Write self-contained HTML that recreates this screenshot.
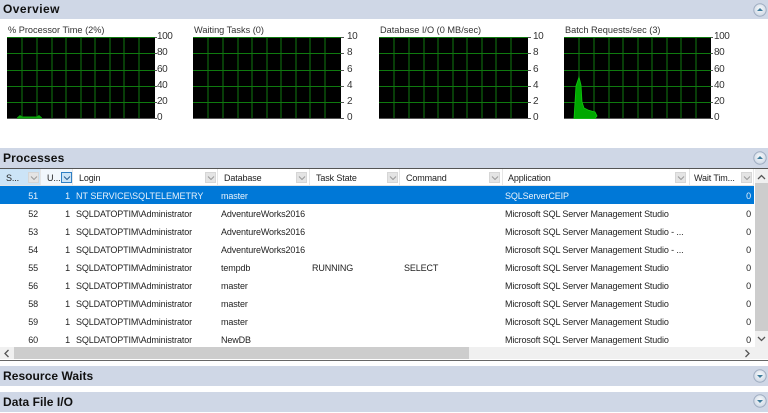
<!DOCTYPE html>
<html>
<head>
<meta charset="utf-8">
<style>
html,body{margin:0;padding:0;background:#fff}
body{width:768px;height:413px;overflow:hidden;position:relative;font-family:"Liberation Sans",sans-serif;font-size:9px;color:#222}
.sec{position:absolute;left:0;width:768px;background:#cfd7e6;font-weight:bold;font-size:12px;color:#111;letter-spacing:.05px;box-sizing:border-box;padding-left:3px;}
.t{position:absolute;white-space:nowrap;line-height:12px;filter:blur(.3px);font-size:9.2px;color:#333}
.r{text-align:right}
.row{position:absolute;left:0;width:754px;height:18px}
.sel{background:#0078d7;color:#e8f2fb}
.c{position:absolute;top:4px;white-space:nowrap;line-height:12px;filter:blur(.3px);letter-spacing:-.13px}
.h{position:absolute;top:0;height:16px;background:#fff;border-right:1px solid #e6e6e6;box-sizing:border-box}
.f{position:absolute;top:3px;width:11px;height:11px;background:#e4e4e4;box-sizing:border-box;border:1px solid #d6d6d6}
.f svg{position:absolute;left:1px;top:2px}
svg{display:block}
.lbl{position:absolute;font-size:10px;letter-spacing:-.45px;line-height:12px;filter:blur(.3px);color:#333}
</style>
</head>
<body>

<div class="sec" style="top:0;height:19px;line-height:18px;letter-spacing:.45px">Overview</div>
<div class="sec" style="top:148px;height:20px;line-height:20px;letter-spacing:.15px">Processes</div>
<div class="sec" style="top:366px;height:20px;line-height:20px">Resource Waits</div>
<div class="sec" style="top:392px;height:20px;line-height:20px">Data File I/O</div>

<svg style="position:absolute;left:0;top:0" width="768" height="413">
  <defs>
    <radialGradient id="b" cx="50%" cy="40%" r="60%"><stop offset="0" stop-color="#f8fafc"/><stop offset="1" stop-color="#cdd7e4"/></radialGradient>
  </defs>
  <g stroke="#a0aec2" stroke-width="1" fill="url(#b)">
    <circle cx="760" cy="10" r="6.2"/><circle cx="760" cy="158" r="6.2"/><circle cx="760" cy="376" r="6.2"/><circle cx="760" cy="401" r="6.2"/>
  </g>
  <g fill="#3d7c9c">
    <path d="M757 11h6l-3-3z"/><path d="M757 159h6l-3-3z"/><path d="M757 375h6l-3 3z"/><path d="M757 400h6l-3 3z"/>
  </g>
</svg>

<!-- Chart labels -->
<div class="t" style="left:8px;top:24px">% Processor Time (2%)</div>
<div class="t" style="left:194px;top:24px">Waiting Tasks (0)</div>
<div class="t" style="left:380px;top:24px">Database I/O (0 MB/sec)</div>
<div class="t" style="left:565px;top:24px">Batch Requests/sec (3)</div>

<!-- Charts -->
<svg style="position:absolute;left:7px;top:37px" width="154" height="84" shape-rendering="crispEdges">
  <rect width="148" height="82" fill="#000"/>
  <g stroke="#0f7a0f"><path d="M15 0V82M30 0V82M45 0V82M59 0V82M74 0V82M88 0V82M103 0V82M117 0V82M132 0V82M0 .5H148M0 16.5H148M0 33.5H148M0 49.5H148M0 65.5H148"/></g>
  <path d="M0 81.5H148" stroke="#555"/>
  <path d="M148 .5h2M148 16.5h2M148 33.5h2M148 49.5h2M148 65.5h2M148 81.5h2" stroke="#555"/>
  <path d="M10 80.5L13 78L15 79.5H30L32 78L35 80.5L35 81.5H10Z" fill="#0aa80a" shape-rendering="auto"/>
</svg>
<svg style="position:absolute;left:193px;top:37px" width="154" height="84" shape-rendering="crispEdges">
  <rect width="148" height="82" fill="#000"/>
  <g stroke="#0f7a0f"><path d="M15 0V82M30 0V82M45 0V82M59 0V82M74 0V82M88 0V82M103 0V82M117 0V82M132 0V82M0 .5H148M0 16.5H148M0 33.5H148M0 49.5H148M0 65.5H148"/></g>
  <path d="M0 81.5H148" stroke="#555"/>
  <path d="M148 .5h3M148 16.5h3M148 33.5h3M148 49.5h3M148 65.5h3M148 81.5h3" stroke="#555"/>
</svg>
<svg style="position:absolute;left:379px;top:37px" width="154" height="84" shape-rendering="crispEdges">
  <rect width="149" height="82" fill="#000"/>
  <g stroke="#0f7a0f"><path d="M15 0V82M30 0V82M45 0V82M59 0V82M74 0V82M88 0V82M103 0V82M117 0V82M132 0V82M0 .5H149M0 16.5H149M0 33.5H149M0 49.5H149M0 65.5H149"/></g>
  <path d="M0 81.5H149" stroke="#555"/>
  <path d="M149 .5h3M149 16.5h3M149 33.5h3M149 49.5h3M149 65.5h3M149 81.5h3" stroke="#555"/>
</svg>
<svg style="position:absolute;left:564px;top:37px" width="154" height="84" shape-rendering="crispEdges">
  <rect width="147" height="82" fill="#000"/>
  <g stroke="#0f7a0f"><path d="M15 0V82M30 0V82M45 0V82M59 0V82M74 0V82M88 0V82M103 0V82M117 0V82M132 0V82M0 .5H147M0 16.5H147M0 33.5H147M0 49.5H147M0 65.5H147"/></g>
  <path d="M0 81.5H147" stroke="#555"/>
  <path d="M147 .5h2M147 16.5h2M147 33.5h2M147 49.5h2M147 65.5h2M147 81.5h2" stroke="#555"/>
  <path d="M10 81.5L12 49L15 40L17 48L18 65L20 71L24 73L29 74.5L31 75L33 79L31 81.5Z" fill="#00a800" stroke="#10c810" stroke-width=".8" shape-rendering="auto"/>
</svg>

<!-- Axis labels -->
<div class="lbl" style="left:157px;top:31px">100</div><div class="lbl" style="left:157px;top:47px">80</div><div class="lbl" style="left:157px;top:64px">60</div><div class="lbl" style="left:157px;top:80px">40</div><div class="lbl" style="left:157px;top:96px">20</div><div class="lbl" style="left:157px;top:112px">0</div>
<div class="lbl" style="left:347px;top:31px">10</div><div class="lbl" style="left:347px;top:47px">8</div><div class="lbl" style="left:347px;top:64px">6</div><div class="lbl" style="left:347px;top:80px">4</div><div class="lbl" style="left:347px;top:96px">2</div><div class="lbl" style="left:347px;top:112px">0</div>
<div class="lbl" style="left:533px;top:31px">10</div><div class="lbl" style="left:533px;top:47px">8</div><div class="lbl" style="left:533px;top:64px">6</div><div class="lbl" style="left:533px;top:80px">4</div><div class="lbl" style="left:533px;top:96px">2</div><div class="lbl" style="left:533px;top:112px">0</div>
<div class="lbl" style="left:714px;top:31px">100</div><div class="lbl" style="left:714px;top:47px">80</div><div class="lbl" style="left:714px;top:64px">60</div><div class="lbl" style="left:714px;top:80px">40</div><div class="lbl" style="left:714px;top:96px">20</div><div class="lbl" style="left:714px;top:112px">0</div>

<!-- Grid -->
<div style="position:absolute;left:0;top:168px;width:768px;height:1px;background:#555"></div>
<div style="position:absolute;left:0;top:169px;width:754px;height:17px">
  <div class="h" style="left:0;width:41px;background:#cce4f7"></div>
  <div class="h" style="left:41px;width:32px;background:#f2f7fc"></div>
  <div class="h" style="left:73px;width:145px"></div>
  <div class="h" style="left:218px;width:92px"></div>
  <div class="h" style="left:310px;width:90px"></div>
  <div class="h" style="left:400px;width:103px"></div>
  <div class="h" style="left:503px;width:187px"></div>
  <div class="h" style="left:690px;width:64px"></div>
  <div class="c" style="left:6px;top:3px">S...</div>
  <div class="c" style="left:47px;top:3px">U...</div>
  <div class="c" style="left:79px;top:3px">Login</div>
  <div class="c" style="left:224px;top:3px">Database</div>
  <div class="c" style="left:316px;top:3px">Task State</div>
  <div class="c" style="left:406px;top:3px">Command</div>
  <div class="c" style="left:508px;top:3px">Application</div>
  <div class="c" style="left:694px;top:3px">Wait Tim...</div>
  <div class="f" style="left:28px"><svg width="8" height="6"><path d="M1 1.5L4 4.5L7 1.5" fill="none" stroke="#999"/></svg></div>
  <div class="f" style="left:61px;background:#cce4f7;border-color:#2f7fc4"><svg width="8" height="6"><path d="M1 1.5L4 4.5L7 1.5" fill="none" stroke="#2a5d90"/></svg></div>
  <div class="f" style="left:205px"><svg width="8" height="6"><path d="M1 1.5L4 4.5L7 1.5" fill="none" stroke="#999"/></svg></div>
  <div class="f" style="left:296px"><svg width="8" height="6"><path d="M1 1.5L4 4.5L7 1.5" fill="none" stroke="#999"/></svg></div>
  <div class="f" style="left:387px"><svg width="8" height="6"><path d="M1 1.5L4 4.5L7 1.5" fill="none" stroke="#999"/></svg></div>
  <div class="f" style="left:489px"><svg width="8" height="6"><path d="M1 1.5L4 4.5L7 1.5" fill="none" stroke="#999"/></svg></div>
  <div class="f" style="left:675px"><svg width="8" height="6"><path d="M1 1.5L4 4.5L7 1.5" fill="none" stroke="#999"/></svg></div>
  <div class="f" style="left:741px"><svg width="8" height="6"><path d="M1 1.5L4 4.5L7 1.5" fill="none" stroke="#999"/></svg></div>
</div>
<div style="position:absolute;left:0;top:185px;width:754px;height:1px;background:#e4e4e4"></div>

<div class="row sel" style="top:186px"><div class="c r" style="right:716px">51</div><div class="c r" style="right:684px">1</div><div class="c" style="left:76px;letter-spacing:0">NT SERVICE\SQLTELEMETRY</div><div class="c" style="left:221px">master</div><div class="c" style="left:505px">SQLServerCEIP</div><div class="c r" style="right:3px">0</div></div>
<div class="row" style="top:204px"><div class="c r" style="right:716px">52</div><div class="c r" style="right:684px">1</div><div class="c" style="left:76px">SQLDATOPTIM\Administrator</div><div class="c" style="left:221px">AdventureWorks2016</div><div class="c" style="left:505px">Microsoft SQL Server Management Studio</div><div class="c r" style="right:3px">0</div></div>
<div class="row" style="top:222px"><div class="c r" style="right:716px">53</div><div class="c r" style="right:684px">1</div><div class="c" style="left:76px">SQLDATOPTIM\Administrator</div><div class="c" style="left:221px">AdventureWorks2016</div><div class="c" style="left:505px">Microsoft SQL Server Management Studio - ...</div><div class="c r" style="right:3px">0</div></div>
<div class="row" style="top:240px"><div class="c r" style="right:716px">54</div><div class="c r" style="right:684px">1</div><div class="c" style="left:76px">SQLDATOPTIM\Administrator</div><div class="c" style="left:221px">AdventureWorks2016</div><div class="c" style="left:505px">Microsoft SQL Server Management Studio - ...</div><div class="c r" style="right:3px">0</div></div>
<div class="row" style="top:258px"><div class="c r" style="right:716px">55</div><div class="c r" style="right:684px">1</div><div class="c" style="left:76px">SQLDATOPTIM\Administrator</div><div class="c" style="left:221px">tempdb</div><div class="c" style="left:312px">RUNNING</div><div class="c" style="left:404px">SELECT</div><div class="c" style="left:505px">Microsoft SQL Server Management Studio</div><div class="c r" style="right:3px">0</div></div>
<div class="row" style="top:276px"><div class="c r" style="right:716px">56</div><div class="c r" style="right:684px">1</div><div class="c" style="left:76px">SQLDATOPTIM\Administrator</div><div class="c" style="left:221px">master</div><div class="c" style="left:505px">Microsoft SQL Server Management Studio</div><div class="c r" style="right:3px">0</div></div>
<div class="row" style="top:294px"><div class="c r" style="right:716px">58</div><div class="c r" style="right:684px">1</div><div class="c" style="left:76px">SQLDATOPTIM\Administrator</div><div class="c" style="left:221px">master</div><div class="c" style="left:505px">Microsoft SQL Server Management Studio</div><div class="c r" style="right:3px">0</div></div>
<div class="row" style="top:312px"><div class="c r" style="right:716px">59</div><div class="c r" style="right:684px">1</div><div class="c" style="left:76px">SQLDATOPTIM\Administrator</div><div class="c" style="left:221px">master</div><div class="c" style="left:505px">Microsoft SQL Server Management Studio</div><div class="c r" style="right:3px">0</div></div>
<div class="row" style="top:330px;height:17px"><div class="c r" style="right:716px">60</div><div class="c r" style="right:684px">1</div><div class="c" style="left:76px">SQLDATOPTIM\Administrator</div><div class="c" style="left:221px">NewDB</div><div class="c" style="left:505px">Microsoft SQL Server Management Studio</div><div class="c r" style="right:3px">0</div></div>

<!-- Vertical scrollbar -->
<div style="position:absolute;left:755px;top:169px;width:13px;height:178px;background:#f0f0f0"></div>
<div style="position:absolute;left:755px;top:183px;width:13px;height:148px;background:#cdcdcd"></div>
<svg style="position:absolute;left:755px;top:173px" width="13" height="8"><path d="M3 6L6.5 2.5L10 6" fill="none" stroke="#555" stroke-width="1.3"/></svg>
<svg style="position:absolute;left:755px;top:335px" width="13" height="8"><path d="M3 2L6.5 5.5L10 2" fill="none" stroke="#555" stroke-width="1.3"/></svg>

<!-- Horizontal scrollbar -->
<div style="position:absolute;left:0;top:347px;width:768px;height:12px;background:#f0f0f0"></div>
<div style="position:absolute;left:14px;top:347px;width:455px;height:12px;background:#cdcdcd"></div>
<svg style="position:absolute;left:3px;top:349px" width="8" height="9"><path d="M5.5 1L2 4.5L5.5 8" fill="none" stroke="#555" stroke-width="1.3"/></svg>
<svg style="position:absolute;left:743px;top:349px" width="8" height="9"><path d="M2.5 1L6 4.5L2.5 8" fill="none" stroke="#555" stroke-width="1.3"/></svg>
<div style="position:absolute;left:0;top:360px;width:768px;height:1px;background:#666"></div>

</body>
</html>
